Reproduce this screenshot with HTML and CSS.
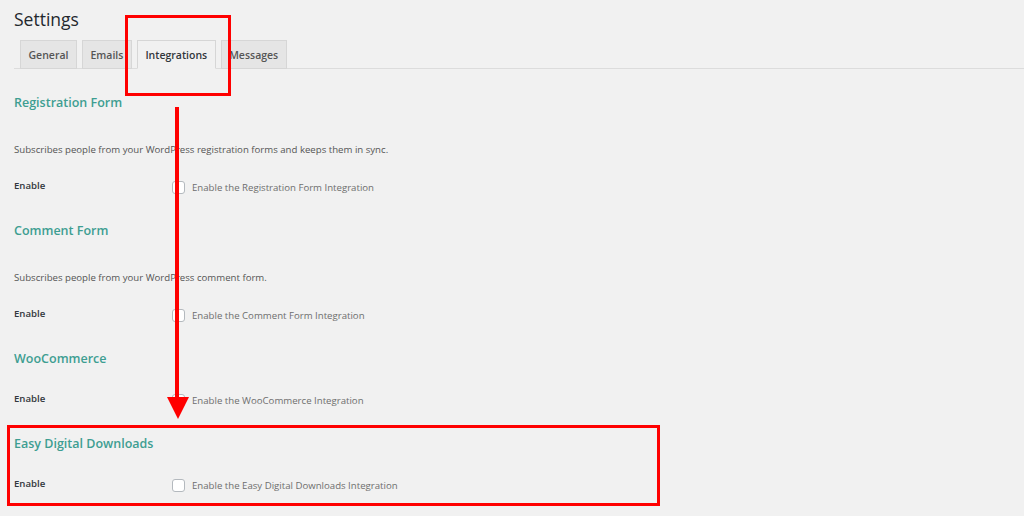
FILE: index.html
```html
<!DOCTYPE html>
<html>
<head>
<meta charset="utf-8">
<link rel="stylesheet" href="styles.css">
</head>
<body>
<div class="wrap">
  <h1 class="page-title">Settings</h1>
  <nav class="tabs">
    <a class="tab">General</a>
    <a class="tab">Emails</a>
    <a class="tab tab-active">Integrations</a>
    <a class="tab">Messages</a>
  </nav>

  <section class="section first">
    <h2 class="section-title">Registration Form</h2>
    <p class="desc">Subscribes people from your WordPress registration forms and keeps them in sync.</p>
    <div class="row">
      <span class="row-label">Enable</span>
      <label class="check"><span class="box"></span>Enable the Registration Form Integration</label>
    </div>
  </section>

  <section class="section">
    <h2 class="section-title">Comment Form</h2>
    <p class="desc">Subscribes people from your WordPress comment form.</p>
    <div class="row">
      <span class="row-label">Enable</span>
      <label class="check"><span class="box"></span>Enable the Comment Form Integration</label>
    </div>
  </section>

  <section class="section">
    <h2 class="section-title">WooCommerce</h2>
    <div class="row row-nodesc">
      <span class="row-label">Enable</span>
      <label class="check"><span class="box"></span>Enable the WooCommerce Integration</label>
    </div>
  </section>

  <section class="section">
    <h2 class="section-title">Easy Digital Downloads</h2>
    <div class="row row-nodesc">
      <span class="row-label">Enable</span>
      <label class="check"><span class="box"></span>Enable the Easy Digital Downloads Integration</label>
    </div>
  </section>
</div>

<div class="annot annot-tab"></div>
<div class="annot annot-line"></div>
<div class="annot annot-head"></div>
<div class="annot annot-box"></div>
</body>
</html>
```

FILE: styles.css
```css
html, body {
  margin: 0;
  padding: 0;
  background: #f1f1f1;
  font-family: "Open Sans", "Noto Sans", sans-serif;
  color: #23282d;
}
body {
  width: 1024px;
  height: 516px;
  overflow: hidden;
  position: relative;
}
.wrap {
  padding-left: 14px;
}
.page-title {
  margin: 0;
  padding-top: 7px;
  font-size: 17.5px;
  line-height: 24px;
  font-weight: 400;
  color: #23282d;
}
.tabs {
  display: flex;
  margin-top: 9px;
  height: 28px;
  border-bottom: 1px solid #dcdcdc;
  padding-left: 6px;
  gap: 5px;
}
.tab {
  display: block;
  box-sizing: border-box;
  height: 29px;
  margin-bottom: -1px;
  padding: 0 7.5px;
  line-height: 28px;
  font-size: 10.5px;
  font-weight: 600;
  color: #555;
  background: #e5e5e5;
  border: 1px solid #d6d6d6;
}
.tab-active {
  background: #f1f1f1;
  border-bottom-color: #f1f1f1;
  color: #32373c;
}
.section {
  margin-top: 27px;
}
.section.first {
  margin-top: 23.5px;
}
.section-title {
  margin: 0;
  font-size: 12.5px;
  line-height: 20px;
  font-weight: 600;
  color: #3e9e91;
}
.desc {
  margin: 29px 0 0;
  font-size: 9.65px;
  line-height: 16px;
  color: #555;
}
.row {
  display: grid;
  grid-template-columns: 158px 1fr;
  height: 16px;
  margin-top: 20px;
  line-height: 16px;
  font-size: 9.65px;
}
.row-nodesc {
  margin-top: 22px;
}
.row-label {
  font-weight: 600;
  color: #32373c;
}
.check {
  display: flex;
  align-items: center;
  gap: 7px;
  height: 16px;
  margin-top: 2px;
  color: #6e6e6e;
}
.box {
  display: inline-block;
  box-sizing: border-box;
  width: 13px;
  height: 13px;
  border: 1px solid #b4b9be;
  border-radius: 3px;
  background: #fff;
}
.annot {
  position: absolute;
}
.annot-tab {
  left: 125px;
  top: 15px;
  width: 106px;
  height: 81px;
  box-sizing: border-box;
  border: 3px solid #ff0000;
}
.annot-line {
  left: 175px;
  top: 107px;
  width: 4px;
  height: 292px;
  background: #ff0000;
}
.annot-head {
  left: 167px;
  top: 397px;
  width: 0;
  height: 0;
  border-left: 11px solid transparent;
  border-right: 11px solid transparent;
  border-top: 22px solid #ff0000;
}
.annot-box {
  left: 7px;
  top: 425px;
  width: 653px;
  height: 81px;
  box-sizing: border-box;
  border: 3px solid #ff0000;
}
```
